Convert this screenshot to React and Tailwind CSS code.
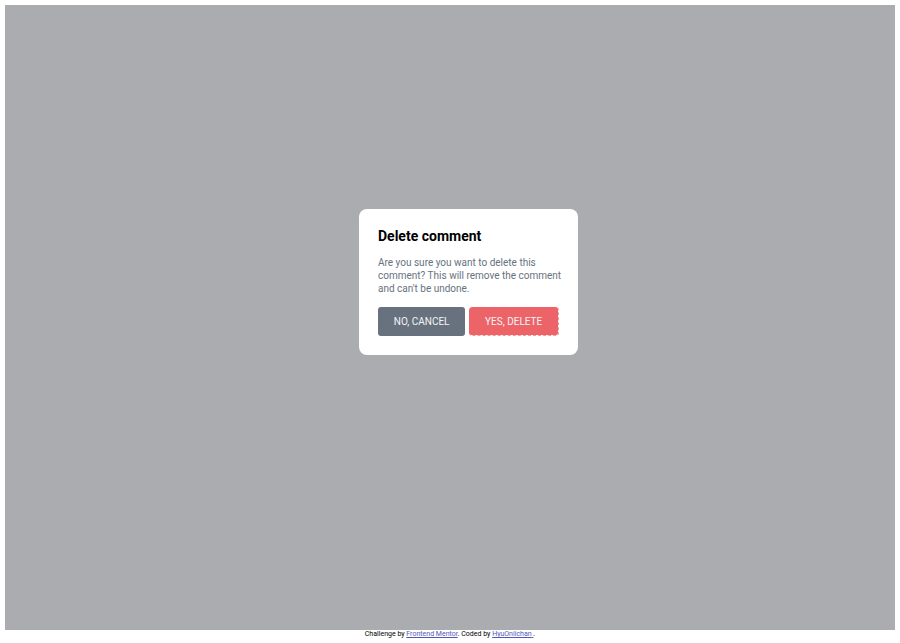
function DeleteDialog() {
  return (
    <div
      role="dialog"
      aria-labelledby="dialog-title"
      className="ml-[37px] w-[219px] rounded-lg bg-white px-[19px] py-[19px]"
    >
      <h1 id="dialog-title" className="mb-3 text-[14px] leading-4 font-bold text-black">
        Delete comment
      </h1>
      <p className="-mr-2 mb-3 text-[10px] leading-[13px] text-[#67727e]">
        Are you sure you want to delete this comment? This will remove the comment and can't be undone.
      </p>
      <div className="flex gap-1">
        <button type="button" className="h-[29px] flex-auto rounded-[3px] bg-[#67727e] text-[10px] text-gray-100">
          NO, CANCEL
        </button>
        <button
          type="button"
          className="h-[29px] flex-auto rounded-[3px] border-r border-b border-dashed border-[#f3999c] bg-[#ed6468] bg-clip-padding text-[10px] text-gray-100"
        >
          YES, DELETE
        </button>
      </div>
    </div>
  )
}

function Attribution() {
  return (
    <footer className="text-center text-[7px] leading-2 text-black">
      Challenge by{" "}
      <a href="#" className="text-[#5357b6] underline">
        Frontend Mentor
      </a>
      . Coded by{" "}
      <a href="#" className="text-[#5357b6] underline">
        HyuOniichan{" "}
      </a>
      .
    </footer>
  )
}

export default function App() {
  return (
    <div className="flex min-h-screen flex-col bg-white px-[5px] pt-[5px] pb-[5px] font-['Roboto',sans-serif]">
      <main className="flex flex-1 items-center justify-center bg-[#aaacaf] pb-[71px]">
        <DeleteDialog />
      </main>
      <Attribution />
    </div>
  )
}
